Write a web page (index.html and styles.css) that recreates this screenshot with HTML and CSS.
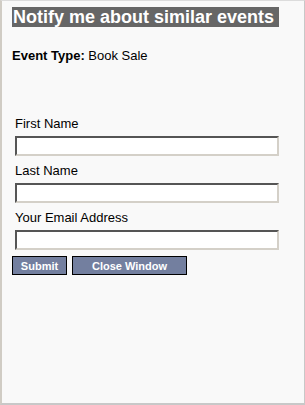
FILE: index.html
```html
<!DOCTYPE html>
<html lang="en">
<head>
  <meta charset="UTF-8" />
  <title>Notify me</title>
  <link rel="stylesheet" href="styles.css">
</head>
<body>
  <div class="wrap">
    <h1>Notify me about similar events</h1>
    <p class="event-type"><strong>Event Type:</strong> Book Sale</p>

    <form class="notify-form">
      <label for="firstName">First Name</label>
      <input type="text" id="firstName" />
      <label for="lastName">Last Name</label>
      <input type="text" id="lastName" />
      <label for="email">Your Email Address</label>
      <input type="text" id="email" />
      <div class="buttons">
        <button type="button" class="btn">Submit</button>
        <button type="button" class="btn close">Close Window</button>
      </div>
    </form>
  </div>
</body>
</html>
```

FILE: styles.css
```css
html {
  height: 100%;
}

body {
  margin: 0;
  height: 100%;
  box-sizing: border-box;
  font-family: "Liberation Sans", Arial, sans-serif;
  font-size: 13px;
  color: #000;
  background-color: #f9f9f9;
  border-top: 1px solid #dcdcdc;
  border-left: 2px solid #d0ccc4;
  border-right: 1px solid #c8c8c8;
  border-bottom: 2px solid #c8c8c8;
}

.wrap {
  padding: 6px 0 0 10px;
  width: 267px;
}

h1 {
  margin: 0;
  background-color: #666;
  color: #fff;
  font-size: 18px;
  font-weight: bold;
  line-height: 20px;
  padding-left: 1px;
  white-space: nowrap;
}

.event-type {
  margin: 21px 0 0 0;
  line-height: 16px;
}

.notify-form {
  margin-top: 52px;
}

.notify-form label {
  display: block;
  padding-left: 3px;
  line-height: 16px;
  margin-bottom: 4px;
}

.notify-form input {
  display: block;
  box-sizing: border-box;
  width: 264px;
  height: 20px;
  margin: 0 0 7px 3px;
  padding: 0 2px;
  background: #fff;
  border: 2px solid;
  border-color: #555 #d4d0c8 #d4d0c8 #555;
  font-family: inherit;
  font-size: 13px;
}

.buttons {
  display: flex;
  gap: 5px;
  margin-top: -1px;
}

.btn {
  height: 19px;
  padding: 0;
  width: 55px;
  background-color: #737f9f;
  color: #fff;
  border: 1px solid #000;
  font-family: inherit;
  font-size: 11px;
  font-weight: bold;
}

.btn.close {
  width: 115px;
}
```
